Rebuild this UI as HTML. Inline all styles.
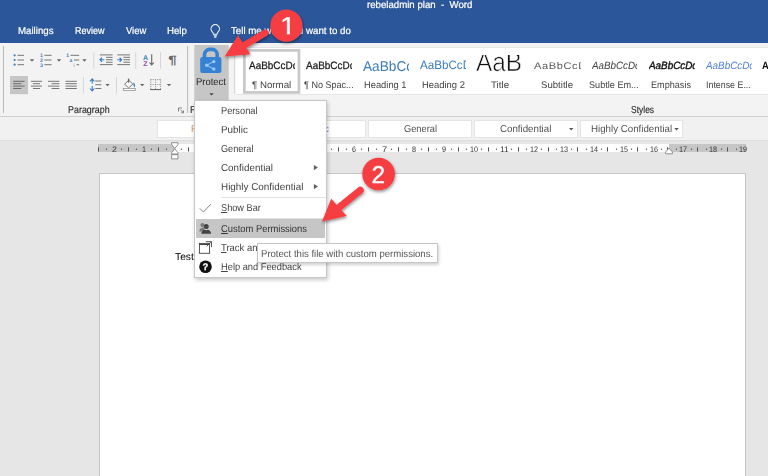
<!DOCTYPE html>
<html lang="en"><head><meta charset="utf-8"><title>rebeladmin plan - Word</title>
<style>
*{box-sizing:border-box;margin:0;padding:0}
html,body{width:768px;height:476px;overflow:hidden;background:#e6e6e6}
body{position:relative;font-family:"Liberation Sans",sans-serif;font-size:10px;color:#444;text-rendering:geometricPrecision}
.a,.t,svg{position:absolute}
.t{white-space:pre;line-height:16px;height:16px;transform-origin:0 50%}
svg{left:0;top:0;width:768px;height:476px;overflow:hidden}
.layer{position:absolute;left:0;top:0;width:768px;height:476px;overflow:hidden}
.lb{top:120px;height:18px;background:#fff;border:1px solid #e4e4e4}
</style></head><body>
<div class="layer">
<div class="a" style="left:0;top:0;width:768px;height:43px;background:#2b579a"></div>
<div class="a" style="left:0;top:43px;width:768px;height:73px;background:#f3f3f3"></div>
<div class="a" style="left:0;top:116px;width:768px;height:1px;background:#cfcfcf"></div>
<div class="a" style="left:0;top:117px;width:768px;height:23px;background:#f1f1f1"></div>
<div class="a" style="left:0;top:140px;width:768px;height:1px;background:#dedede"></div>
<div class="a" style="left:236px;top:47px;width:532px;height:48px;background:#e6e6e6"></div>
<div class="a" style="left:236px;top:48px;width:532px;height:46px;background:#fff"></div>
<div class="a lb" style="left:157px;width:104px"></div>
<div class="a lb" style="left:263px;width:103px"></div>
<div class="a lb" style="left:368px;width:104px"></div>
<div class="a lb" style="left:474px;width:104px"></div>
<div class="a lb" style="left:580px;width:103px"></div>
<div class="a" style="left:98px;top:144px;width:647.5px;height:8px;background:#c6c6c6"></div>
<div class="a" style="left:174px;top:144px;width:495px;height:8px;background:#fefefe"></div>
<div class="a" style="left:99px;top:173px;width:647px;height:310px;background:#fff;border:1px solid #c6c6c6"></div>
<div class="a" style="left:470px;top:54.5px;width:60px;height:24px;overflow:hidden"><div class="t" style="left:6.4px;top:-8.8px;font-size:26.5px;line-height:32px;height:32px;color:#111;-webkit-text-stroke:0.6px #fff;transform:scaleX(0.92)">AaB</div></div>
<svg viewBox="0 0 768 476">
<rect x="98" y="147.3" width="1" height="4.2" fill="#555"/>
<circle cx="106.5" cy="149.2" r="0.65" fill="#444"/>
<circle cx="121.5" cy="149.2" r="0.65" fill="#444"/>
<rect x="128" y="147.3" width="1" height="4.2" fill="#555"/>
<circle cx="136.5" cy="149.2" r="0.65" fill="#444"/>
<circle cx="151.5" cy="149.2" r="0.65" fill="#444"/>
<rect x="158" y="147.3" width="1" height="4.2" fill="#555"/>
<circle cx="166.5" cy="149.2" r="0.65" fill="#444"/>
<circle cx="181.5" cy="149.2" r="0.65" fill="#444"/>
<rect x="188" y="147.3" width="1" height="4.2" fill="#555"/>
<circle cx="196.5" cy="149.2" r="0.65" fill="#444"/>
<circle cx="211.5" cy="149.2" r="0.65" fill="#444"/>
<rect x="218" y="147.3" width="1" height="4.2" fill="#555"/>
<circle cx="226.5" cy="149.2" r="0.65" fill="#444"/>
<circle cx="241.5" cy="149.2" r="0.65" fill="#444"/>
<rect x="248" y="147.3" width="1" height="4.2" fill="#555"/>
<circle cx="256.5" cy="149.2" r="0.65" fill="#444"/>
<circle cx="271.5" cy="149.2" r="0.65" fill="#444"/>
<rect x="278" y="147.3" width="1" height="4.2" fill="#555"/>
<circle cx="286.5" cy="149.2" r="0.65" fill="#444"/>
<circle cx="301.5" cy="149.2" r="0.65" fill="#444"/>
<rect x="308" y="147.3" width="1" height="4.2" fill="#555"/>
<circle cx="316.5" cy="149.2" r="0.65" fill="#444"/>
<circle cx="331.5" cy="149.2" r="0.65" fill="#444"/>
<rect x="338" y="147.3" width="1" height="4.2" fill="#555"/>
<circle cx="346.5" cy="149.2" r="0.65" fill="#444"/>
<circle cx="361.5" cy="149.2" r="0.65" fill="#444"/>
<rect x="368" y="147.3" width="1" height="4.2" fill="#555"/>
<circle cx="376.5" cy="149.2" r="0.65" fill="#444"/>
<circle cx="391.5" cy="149.2" r="0.65" fill="#444"/>
<rect x="398" y="147.3" width="1" height="4.2" fill="#555"/>
<circle cx="406.5" cy="149.2" r="0.65" fill="#444"/>
<circle cx="421.5" cy="149.2" r="0.65" fill="#444"/>
<rect x="428" y="147.3" width="1" height="4.2" fill="#555"/>
<circle cx="436.5" cy="149.2" r="0.65" fill="#444"/>
<circle cx="451.5" cy="149.2" r="0.65" fill="#444"/>
<rect x="458" y="147.3" width="1" height="4.2" fill="#555"/>
<circle cx="466.5" cy="149.2" r="0.65" fill="#444"/>
<circle cx="481.5" cy="149.2" r="0.65" fill="#444"/>
<rect x="488" y="147.3" width="1" height="4.2" fill="#555"/>
<circle cx="496.5" cy="149.2" r="0.65" fill="#444"/>
<circle cx="511.5" cy="149.2" r="0.65" fill="#444"/>
<rect x="518" y="147.3" width="1" height="4.2" fill="#555"/>
<circle cx="526.5" cy="149.2" r="0.65" fill="#444"/>
<circle cx="541.5" cy="149.2" r="0.65" fill="#444"/>
<rect x="548" y="147.3" width="1" height="4.2" fill="#555"/>
<circle cx="556.5" cy="149.2" r="0.65" fill="#444"/>
<circle cx="571.5" cy="149.2" r="0.65" fill="#444"/>
<rect x="577" y="147.3" width="1" height="4.2" fill="#555"/>
<circle cx="586.5" cy="149.2" r="0.65" fill="#444"/>
<circle cx="601.5" cy="149.2" r="0.65" fill="#444"/>
<rect x="607" y="147.3" width="1" height="4.2" fill="#555"/>
<circle cx="616.5" cy="149.2" r="0.65" fill="#444"/>
<circle cx="631.5" cy="149.2" r="0.65" fill="#444"/>
<rect x="637" y="147.3" width="1" height="4.2" fill="#555"/>
<circle cx="646.5" cy="149.2" r="0.65" fill="#444"/>
<circle cx="661.5" cy="149.2" r="0.65" fill="#444"/>
<rect x="667" y="147.3" width="1" height="4.2" fill="#555"/>
<circle cx="676.5" cy="149.2" r="0.65" fill="#444"/>
<circle cx="691.5" cy="149.2" r="0.65" fill="#444"/>
<rect x="697" y="147.3" width="1" height="4.2" fill="#555"/>
<circle cx="706.5" cy="149.2" r="0.65" fill="#444"/>
<circle cx="721.5" cy="149.2" r="0.65" fill="#444"/>
<rect x="727" y="147.3" width="1" height="4.2" fill="#555"/>
<circle cx="736.5" cy="149.2" r="0.65" fill="#444"/>
<rect x="244.35" y="50.4" width="54.6" height="42" fill="#fff" stroke="#c8c8c8" stroke-width="2.7"/>
<rect x="3.0" y="46.0" width="1" height="67.0" fill="#b9b9b9"/>
<rect x="187.1" y="46.0" width="1" height="67.0" fill="#b9b9b9"/>
<circle cx="14.6" cy="55.3" r="1.1" fill="#3b7ec2"/>
<rect x="17.5" y="54.8" width="6.5" height="1.0" fill="#777"/>
<circle cx="14.6" cy="60.0" r="1.1" fill="#3b7ec2"/>
<rect x="17.5" y="59.5" width="6.5" height="1.0" fill="#777"/>
<circle cx="14.6" cy="64.7" r="1.1" fill="#3b7ec2"/>
<rect x="17.5" y="64.2" width="6.5" height="1.0" fill="#777"/>
<path d="M29.8 59.3 h4.4 l-2.2 2.4z" fill="#666"/>
<text x="40" y="57.2" font-family="Liberation Sans, sans-serif" font-size="5.2" font-weight="bold" fill="#3b7ec2">1</text>
<rect x="44.3" y="54.8" width="7.3" height="1.0" fill="#777"/>
<text x="40" y="61.9" font-family="Liberation Sans, sans-serif" font-size="5.2" font-weight="bold" fill="#3b7ec2">2</text>
<rect x="44.3" y="59.5" width="7.3" height="1.0" fill="#777"/>
<text x="40" y="66.6" font-family="Liberation Sans, sans-serif" font-size="5.2" font-weight="bold" fill="#3b7ec2">3</text>
<rect x="44.3" y="64.2" width="7.3" height="1.0" fill="#777"/>
<path d="M56.8 59.3 h4.4 l-2.2 2.4z" fill="#666"/>
<text x="66.2" y="57.2" font-family="Liberation Sans, sans-serif" font-size="5" font-weight="bold" fill="#3b7ec2">1</text>
<rect x="70.5" y="54.8" width="8.7" height="1.0" fill="#777"/>
<text x="69.4" y="61.7" font-family="Liberation Sans, sans-serif" font-size="5" font-weight="bold" fill="#3b7ec2">a</text>
<rect x="74.0" y="59.5" width="5.2" height="1.0" fill="#777"/>
<text x="73.2" y="66.6" font-family="Liberation Sans, sans-serif" font-size="5" font-weight="bold" fill="#8fb4dc">i</text>
<rect x="76.5" y="64.2" width="2.7" height="1.0" fill="#777"/>
<path d="M82.2 59.3 h4.4 l-2.2 2.4z" fill="#666"/>
<rect x="93.3" y="52.3" width="1" height="16.4" fill="#d6d6d6"/>
<rect x="99.8" y="54.4" width="12.8" height="1.0" fill="#777"/><rect x="99.8" y="64.1" width="12.8" height="1.0" fill="#777"/><rect x="106.0" y="56.8" width="6.6" height="1.0" fill="#777"/><rect x="106.0" y="59.2" width="6.6" height="1.0" fill="#777"/><rect x="106.0" y="61.7" width="6.6" height="1.0" fill="#777"/><path d="M104.4 59.75 h-4.2 m1.8 -2 l-2 2 l2 2" stroke="#3b7ec2" stroke-width="1.2" fill="none"/>
<rect x="117.2" y="54.4" width="12.8" height="1.0" fill="#777"/><rect x="117.2" y="64.1" width="12.8" height="1.0" fill="#777"/><rect x="123.4" y="56.8" width="6.6" height="1.0" fill="#777"/><rect x="123.4" y="59.2" width="6.6" height="1.0" fill="#777"/><rect x="123.4" y="61.7" width="6.6" height="1.0" fill="#777"/><path d="M117.2 59.75 h4.2 m-1.8 -2 l2 2 l-2 2" stroke="#3b7ec2" stroke-width="1.2" fill="none"/>
<rect x="135.2" y="52.3" width="1" height="16.4" fill="#d6d6d6"/>
<text x="142.9" y="59.6" font-family="Liberation Sans, sans-serif" font-size="7" font-weight="bold" fill="#3b7ec2">A</text>
<text x="143.2" y="65.7" font-family="Liberation Sans, sans-serif" font-size="7" font-weight="bold" fill="#9a4fb5">Z</text>
<path d="M151.7 54.3 v10.5 m-2.2 -2.3 l2.2 2.4 l2.2 -2.4" stroke="#666" stroke-width="1.1" fill="none"/>
<rect x="160.0" y="52.3" width="1" height="16.4" fill="#d6d6d6"/>
<text x="168.3" y="64.3" font-family="Liberation Sans, sans-serif" font-size="12" font-weight="bold" fill="#666" textLength="8.6" lengthAdjust="spacingAndGlyphs">¶</text>
<rect x="10" y="76" width="18" height="18.2" fill="#c6c6c6"/>
<rect x="13.2" y="80.8" width="11.4" height="1.0" fill="#6a6a6a"/>
<rect x="30.9" y="80.8" width="11.1" height="1.0" fill="#777"/>
<rect x="48.0" y="80.8" width="11.4" height="1.0" fill="#777"/>
<rect x="65.5" y="80.8" width="11.3" height="1.0" fill="#777"/>
<rect x="13.2" y="83.2" width="8.2" height="1.0" fill="#6a6a6a"/>
<rect x="33.0" y="83.2" width="7.0" height="1.0" fill="#777"/>
<rect x="51.6" y="83.2" width="7.8" height="1.0" fill="#777"/>
<rect x="65.5" y="83.2" width="11.3" height="1.0" fill="#777"/>
<rect x="13.2" y="85.6" width="11.4" height="1.0" fill="#6a6a6a"/>
<rect x="30.9" y="85.6" width="11.1" height="1.0" fill="#777"/>
<rect x="48.0" y="85.6" width="11.4" height="1.0" fill="#777"/>
<rect x="65.5" y="85.6" width="11.3" height="1.0" fill="#777"/>
<rect x="13.2" y="88.0" width="8.2" height="1.0" fill="#6a6a6a"/>
<rect x="33.0" y="88.0" width="7.0" height="1.0" fill="#777"/>
<rect x="51.6" y="88.0" width="7.8" height="1.0" fill="#777"/>
<rect x="65.5" y="88.0" width="11.3" height="1.0" fill="#777"/>
<rect x="82.9" y="77.0" width="1" height="16.5" fill="#d6d6d6"/>
<path d="M92.2 79 v4.8 M92.2 86 v4.8 M90 81.3 l2.2 -2.4 l2.2 2.4 M90 88.5 l2.2 2.4 l2.2 -2.4" stroke="#3b7ec2" stroke-width="1.1" fill="none"/>
<rect x="95.3" y="80.5" width="6.0" height="1.0" fill="#777"/>
<rect x="95.3" y="84.2" width="6.0" height="1.0" fill="#777"/>
<rect x="95.3" y="88.0" width="6.0" height="1.0" fill="#777"/>
<path d="M105.4 83.9 h4.4 l-2.2 2.4z" fill="#666"/>
<rect x="116.0" y="77.0" width="1" height="16.5" fill="#d6d6d6"/>
<rect x="123.3" y="88.4" width="12" height="2.2" fill="#fff" stroke="#888" stroke-width="0.7"/>
<path d="M124.6 84.2 l4.2 -4 l4 4 l-4.2 3.6z" fill="#fbfbfb" stroke="#666" stroke-width="0.9"/>
<path d="M128.6 78.6 v4" stroke="#666" stroke-width="1.4" fill="none"/>
<path d="M133.2 82.3 q2.6 1.6 1.6 5.2 q-1.6 -1.2 -1.6 -5.2z" fill="#3b7ec2"/>
<path d="M140.0 83.9 h4.4 l-2.2 2.4z" fill="#666"/>
<path d="M150.4 79.6 h10.4 M150.4 84.6 h10.4 M150.7 79.4 v10 M155.6 79.4 v10 M160.6 79.4 v10" stroke="#888" stroke-width="0.9" stroke-dasharray="1.1 1.1" fill="none"/>
<rect x="150.2" y="89.0" width="10.8" height="1.1" fill="#666"/>
<path d="M166.8 83.9 h4.4 l-2.2 2.4z" fill="#666"/>
<path d="M178.5 111.5 v-3.5 h3.5" stroke="#777" stroke-width="0.9" fill="none"/>
<path d="M180.5 110 l3 2.6 m0 -2.2 v2.4 h-2.4" stroke="#777" stroke-width="0.9" fill="none"/>
<rect x="194.3" y="45" width="34.4" height="55.5" fill="#c6c6c6"/>
<path d="M204.5 58.5 V54.6 A5.2 5.2 0 0 1 209.7 49.4 H212 A5.2 5.2 0 0 1 217.2 54.6 V58.5" stroke="#3581d4" stroke-width="3.6" fill="none"/>
<rect x="200.2" y="56.9" width="21.2" height="16" rx="2" fill="#3581d4"/>
<path d="M213.7 61.6 l-7 3.7 l7 3.7" stroke="#8dbdee" stroke-width="1.1" fill="none"/>
<circle cx="213.8" cy="61.6" r="1.7" fill="#9cc6f1"/><circle cx="206.7" cy="65.3" r="1.7" fill="#9cc6f1"/><circle cx="213.8" cy="69" r="1.7" fill="#9cc6f1"/>
<path d="M209.3 93.2 h4.4 l-2.2 2.4z" fill="#444"/>
<rect x="234.0" y="49.0" width="1" height="45.0" fill="#dadada"/>
<path d="M213.5 34.3 q-0.1 -1.5 -1.4 -2.7 a4.2 4.2 0 1 1 6.3 0 q-1.3 1.2 -1.4 2.7z M213.7 35.8 h3.2 M214.2 37.1 h2.2" stroke="#fff" stroke-width="1.1" fill="none" opacity="0.95"/>
<path d="M569 128 h4.4 l-2.2 2.4z" fill="#555"/>
<path d="M674.3 128 h4.4 l-2.2 2.4z" fill="#555"/>
<path d="M171.6 142.7 h6.4 v1.6 l-3.2 4.3 l-3.2 -4.3z M174.8 148.8 l3.2 4 v1.2 h-6.4 v-1.2z M171.6 154.7 h6.4 v4.2 h-6.4z" fill="#fff" stroke="#777" stroke-width="0.8"/>
<path d="M665.6 153.8 v-1.8 l3.4 -4 l3.4 4 v1.8z" fill="#fff" stroke="#777" stroke-width="0.8"/>
</svg>
<div class="t" style="left:366.63px;top:-2.00px;font-size:10px;color:#fff;transform:scaleX(0.9643);-webkit-text-stroke:0.2px #fff;">rebeladmin plan  -  Word</div>
<div class="t" style="left:18.30px;top:24.00px;font-size:10px;color:#fff;transform:scaleX(0.9686);-webkit-text-stroke:0.2px #fff;">Mailings</div>
<div class="t" style="left:75.13px;top:24.00px;font-size:10px;color:#fff;transform:scaleX(0.8980);-webkit-text-stroke:0.2px #fff;">Review</div>
<div class="t" style="left:125.67px;top:24.00px;font-size:10px;color:#fff;transform:scaleX(0.9391);-webkit-text-stroke:0.2px #fff;">View</div>
<div class="t" style="left:167.10px;top:24.00px;font-size:10px;color:#fff;transform:scaleX(0.9662);-webkit-text-stroke:0.2px #fff;">Help</div>
<div class="t" style="left:230.83px;top:24.00px;font-size:10px;color:#fff;transform:scaleX(0.9707);-webkit-text-stroke:0.2px #fff;">Tell me what you want to do</div>
<div class="t" style="left:68.36px;top:103.00px;font-size:10px;color:#262626;transform:scaleX(0.8925);-webkit-text-stroke:0.12px #262626;">Paragraph</div>
<div class="t" style="left:630.73px;top:103.00px;font-size:10px;color:#262626;transform:scaleX(0.8479);-webkit-text-stroke:0.12px #262626;">Styles</div>
<div class="t" style="left:190.05px;top:103.00px;font-size:10px;color:#262626;transform:scaleX(0.9149);-webkit-text-stroke:0.12px #262626;">Protection</div>
<div class="t" style="left:195.73px;top:75.00px;font-size:10px;color:#2a2a2a;transform:scaleX(0.9443);">Protect</div>
<div class="a" style="left:248.66px;top:58.00px;width:46.14px;height:16px;overflow:hidden"><div class="t" style="left:0;top:0;font-size:10.6px;color:#1a1a1a;transform:scaleX(0.9381);-webkit-text-stroke:0.25px #1a1a1a;">AaBbCcDc</div></div>
<div class="t" style="left:252.15px;top:78.00px;font-size:9.6px;color:#444;transform:scaleX(1.0141);">¶ Normal</div>
<div class="a" style="left:305.66px;top:58.00px;width:46.14px;height:16px;overflow:hidden"><div class="t" style="left:0;top:0;font-size:10.6px;color:#1a1a1a;transform:scaleX(0.9381);-webkit-text-stroke:0.25px #1a1a1a;">AaBbCcDc</div></div>
<div class="t" style="left:304.26px;top:78.00px;font-size:9.6px;color:#444;transform:scaleX(0.9438);">¶ No Spac...</div>
<div class="a" style="left:362.55px;top:59.00px;width:46.45px;height:16px;overflow:hidden"><div class="t" style="left:0;top:0;font-size:14.2px;color:#3a7cbc;transform:scaleX(0.9630);">AaBbCc</div></div>
<div class="t" style="left:364.33px;top:78.00px;font-size:9.6px;color:#444;transform:scaleX(0.9726);">Heading 1</div>
<div class="a" style="left:419.74px;top:57.00px;width:46.26px;height:16px;overflow:hidden"><div class="t" style="left:0;top:0;font-size:12.2px;color:#3a7cbc;transform:scaleX(0.9537);">AaBbCcD</div></div>
<div class="t" style="left:421.52px;top:78.00px;font-size:9.6px;color:#444;transform:scaleX(0.9819);">Heading 2</div>
<div class="t" style="left:491.16px;top:78.00px;font-size:9.6px;color:#444;transform:scaleX(1.0198);">Title</div>
<div class="a" style="left:533.78px;top:59.00px;width:46.82px;height:16px;overflow:hidden"><div class="t" style="left:0;top:0;font-size:9.6px;color:#5a5a5a;transform:scaleX(1.1560);letter-spacing:0.5px;">AaBbCcD</div></div>
<div class="t" style="left:541.12px;top:78.00px;font-size:9.6px;color:#444;transform:scaleX(1.0032);">Subtitle</div>
<div class="a" style="left:591.57px;top:58.00px;width:45.83px;height:16px;overflow:hidden"><div class="t" style="left:0;top:0;font-size:10.6px;color:#404040;transform:scaleX(0.9254);font-style:italic;">AaBbCcDc</div></div>
<div class="t" style="left:589.34px;top:78.00px;font-size:9.6px;color:#444;transform:scaleX(0.9510);">Subtle Em...</div>
<div class="a" style="left:648.67px;top:58.00px;width:46.13px;height:16px;overflow:hidden"><div class="t" style="left:0;top:0;font-size:10.6px;color:#111;transform:scaleX(0.9317);font-style:italic;-webkit-text-stroke:0.4px #111;">AaBbCcDc</div></div>
<div class="t" style="left:651.34px;top:78.00px;font-size:9.6px;color:#444;transform:scaleX(0.9486);">Emphasis</div>
<div class="a" style="left:705.78px;top:58.00px;width:46.02px;height:16px;overflow:hidden"><div class="t" style="left:0;top:0;font-size:10.6px;color:#4f81d9;transform:scaleX(0.9311);font-style:italic;">AaBbCcDc</div></div>
<div class="t" style="left:706.12px;top:78.00px;font-size:9.6px;color:#444;transform:scaleX(0.9224);">Intense E...</div>
<div class="t" style="left:761.78px;top:58.00px;font-size:10.6px;color:#111;transform:scaleX(0.8825);font-weight:bold;">AaBbCcDc</div>
<div class="t" style="left:190.64px;top:122.00px;font-size:10px;color:#d98a4a;transform:scaleX(0.9106);">Personal</div>
<div class="t" style="left:302.11px;top:122.00px;font-size:10px;color:#4a7fc8;transform:scaleX(0.9879);">Public</div>
<div class="t" style="left:404.23px;top:122.00px;font-size:10px;color:#505050;transform:scaleX(0.9264);">General</div>
<div class="t" style="left:499.92px;top:122.00px;font-size:10px;color:#505050;transform:scaleX(0.9712);">Confidential</div>
<div class="t" style="left:591.11px;top:122.00px;font-size:10px;color:#505050;transform:scaleX(0.9729);">Highly Confidential</div>
<div class="t" style="left:175.07px;top:250.00px;font-size:10.2px;color:#000;transform:scaleX(1.0083);">Test</div>
<div class="t" style="left:112.15px;top:142.00px;font-size:8px;color:#333;transform:scaleX(1.0953);">2</div>
<div class="t" style="left:142.47px;top:142.00px;font-size:8px;color:#333;transform:scaleX(0.9005);">1</div>
<div class="t" style="left:202.39px;top:142.00px;font-size:8px;color:#333;transform:scaleX(0.9005);">1</div>
<div class="t" style="left:231.99px;top:142.00px;font-size:8px;color:#333;transform:scaleX(1.0953);">2</div>
<div class="t" style="left:261.93px;top:142.00px;font-size:8px;color:#333;transform:scaleX(0.9128);">3</div>
<div class="t" style="left:291.97px;top:142.00px;font-size:8px;color:#333;transform:scaleX(0.9000);">4</div>
<div class="t" style="left:321.87px;top:142.00px;font-size:8px;color:#333;transform:scaleX(0.9074);">5</div>
<div class="t" style="left:351.88px;top:142.00px;font-size:8px;color:#333;transform:scaleX(0.8988);">6</div>
<div class="t" style="left:381.64px;top:142.00px;font-size:8px;color:#333;transform:scaleX(1.1530);">7</div>
<div class="t" style="left:411.80px;top:142.00px;font-size:8px;color:#333;transform:scaleX(0.8972);">8</div>
<div class="t" style="left:441.75px;top:142.00px;font-size:8px;color:#333;transform:scaleX(0.9020);">9</div>
<div class="t" style="left:469.78px;top:142.00px;font-size:8px;color:#333;transform:scaleX(0.8981);">10</div>
<div class="t" style="left:499.68px;top:142.00px;font-size:8px;color:#333;transform:scaleX(1.0291);">11</div>
<div class="t" style="left:529.69px;top:142.00px;font-size:8px;color:#333;transform:scaleX(0.9040);">12</div>
<div class="t" style="left:559.66px;top:142.00px;font-size:8px;color:#333;transform:scaleX(0.9002);">13</div>
<div class="t" style="left:589.61px;top:142.00px;font-size:8px;color:#333;transform:scaleX(0.9025);">14</div>
<div class="t" style="left:619.58px;top:142.00px;font-size:8px;color:#333;transform:scaleX(0.8983);">15</div>
<div class="t" style="left:649.54px;top:142.00px;font-size:8px;color:#333;transform:scaleX(0.9002);">16</div>
<div class="t" style="left:679.49px;top:142.00px;font-size:8px;color:#333;transform:scaleX(0.9098);">17</div>
<div class="t" style="left:709.46px;top:142.00px;font-size:8px;color:#333;transform:scaleX(0.8983);">18</div>
<div class="t" style="left:739.42px;top:142.00px;font-size:8px;color:#333;transform:scaleX(0.8968);">19</div>
</div>
<div class="layer">
<div class="a" style="left:194px;top:100px;width:132.5px;height:177.5px;background:#fff;border:1px solid #c6c6c6;box-shadow:1px 2px 4px rgba(0,0,0,0.22)"></div>
<div class="a" style="left:221px;top:197px;width:104px;height:1px;background:#e2e2e2"></div>
<div class="a" style="left:221px;top:217.5px;width:104px;height:1px;background:#e2e2e2"></div>
<div class="a" style="left:196px;top:219px;width:129px;height:18.6px;background:#c6c6c6"></div>
<svg viewBox="0 0 768 476">
<path d="M313.9 164.9 l4 2.7 l-4 2.7z" fill="#606060"/>
<path d="M313.9 183.9 l4 2.7 l-4 2.7z" fill="#606060"/>
<path d="M199.8 208.4 l3.6 3.6 l7.6 -8" stroke="#777" stroke-width="0.9" fill="none"/>
<circle cx="202.4" cy="225" r="2" fill="#7a7a7a"/><path d="M199.3 231.6 q0.2 -3.4 2.6 -3.8 h2.4 v3.8z" fill="#7a7a7a"/><circle cx="206.2" cy="226.4" r="2.5" fill="#444"/><path d="M201.3 233.8 q0.2 -3.2 3.2 -4 q1.7 0.9 3.4 0 q3 0.8 3.2 4z" fill="#444"/>
<rect x="199.4" y="243.4" width="10.2" height="9.9" fill="#fff" stroke="#444" stroke-width="0.9"/><path d="M199.4 244.5 h10.2" stroke="#444" stroke-width="1"/><path d="M205.8 241.7 h5.7 v5.4 M211.3 241.9 l-4.6 4.4" stroke="#444" stroke-width="0.9" fill="none"/>
<circle cx="205.5" cy="266.7" r="6.3" fill="#111"/><text x="205.5" y="270.2" text-anchor="middle" font-family="Liberation Sans, sans-serif" font-size="9.5" font-weight="bold" fill="#fff" stroke="#fff" stroke-width="0.3" opacity="0.99">?</text>
</svg>
<div class="t" style="left:220.63px;top:104.00px;font-size:10px;color:#444;transform:scaleX(0.9236);">Personal</div>
<div class="t" style="left:220.61px;top:123.00px;font-size:10px;color:#444;transform:scaleX(0.9841);">Public</div>
<div class="t" style="left:220.74px;top:142.00px;font-size:10px;color:#444;transform:scaleX(0.9120);">General</div>
<div class="t" style="left:220.71px;top:161.00px;font-size:10px;color:#444;transform:scaleX(0.9846);">Confidential</div>
<div class="t" style="left:220.61px;top:180.00px;font-size:10px;color:#444;transform:scaleX(0.9887);">Highly Confidential</div>
<div class="t" style="left:220.65px;top:201.00px;font-size:10px;color:#444;transform:scaleX(0.9186);"><u>S</u>how Bar</div>
<div class="t" style="left:220.73px;top:222.00px;font-size:10px;color:#333;transform:scaleX(0.9375);"><u>C</u>ustom Permissions</div>
<div class="t" style="left:220.78px;top:241.00px;font-size:10px;color:#444;transform:scaleX(0.9448);"><u>T</u>rack and Revoke</div>
<div class="t" style="left:220.63px;top:260.00px;font-size:10px;color:#444;transform:scaleX(0.9290);"><u>H</u>elp and Feedback</div>
</div>
<div class="layer">
<div class="a" style="left:257px;top:243.3px;width:180.5px;height:19.4px;background:#fff;border:1px solid #c6c6c6;box-shadow:1px 2px 3px rgba(0,0,0,0.18)"></div>
<div class="t" style="left:261.32px;top:247.00px;font-size:10px;color:#555;transform:scaleX(0.9558);">Protect this file with custom permissions.</div>
<svg viewBox="0 0 768 476">
<defs><filter id="sh" x="-30%" y="-30%" width="170%" height="170%"><feDropShadow dx="0.6" dy="1.6" stdDeviation="1.6" flood-color="#000" flood-opacity="0.45"/></filter></defs>
<g filter="url(#sh)" fill="#f53d42" stroke="#f53d42">
<path d="M265.2 32.8 L244.6 45.1" stroke-width="6.6" stroke-linecap="round" fill="none"/>
<path d="M224.7 56.6 L238 35.2 L250.5 54.2 Z" stroke="none"/>
<circle cx="286.4" cy="25.7" r="16.1" stroke="none"/>
<path d="M360.3 190.3 L339.6 206.9" stroke-width="7" stroke-linecap="round" fill="none"/>
<path d="M322 221.5 L331.2 198.8 L346.7 216 Z" stroke="none"/>
<circle cx="378.6" cy="174" r="16.3" stroke="none"/>
</g>
<text transform="translate(287.9 33.9) scale(1.12 1)" x="0" y="0" text-anchor="middle" font-family="Liberation Sans, sans-serif" font-size="24.4" fill="#fff" stroke="#fff" stroke-width="0.4" opacity="0.99">1</text>
<rect x="280.70" y="31.50" width="6.15" height="3.4" fill="#f53d42"/>
<rect x="289.95" y="31.50" width="6.00" height="3.4" fill="#f53d42"/>
<text x="378.4" y="182.8" text-anchor="middle" font-family="Liberation Sans, sans-serif" font-size="24.4" fill="#fff" stroke="#fff" stroke-width="0.4" opacity="0.99">2</text>
</svg>
</div>
</body></html>
